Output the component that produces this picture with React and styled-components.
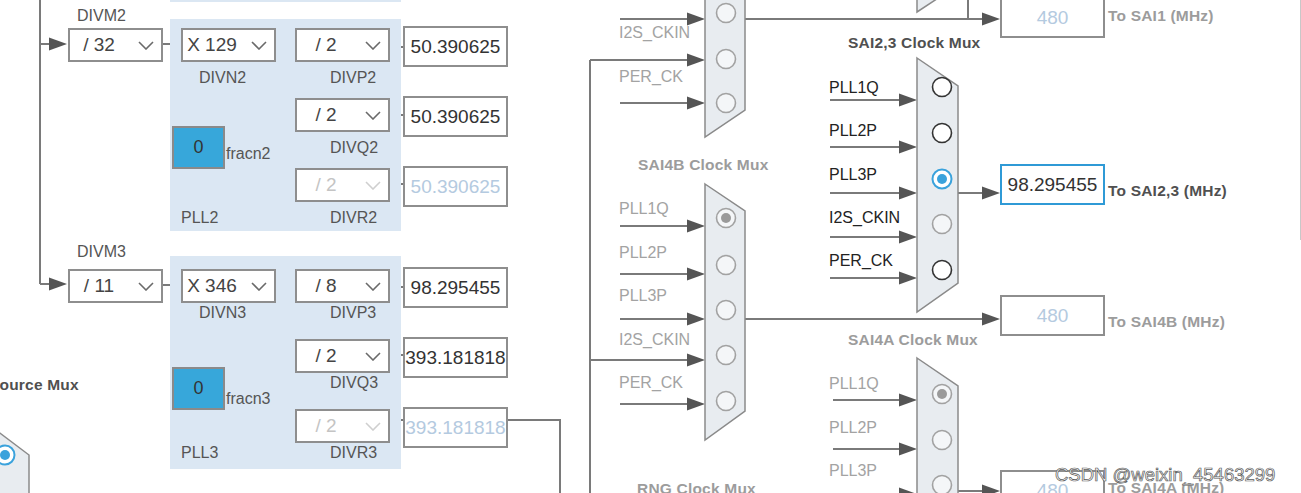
import React from 'react';
import styled, { createGlobalStyle } from 'styled-components';

const GlobalStyle = createGlobalStyle`
  html, body { margin: 0; padding: 0; background: #fff; }
  body { font-family: "Liberation Sans", Arial, sans-serif; }
`;

const Canvas = styled.div`
  position: relative;
  width: 1301px;
  height: 493px;
  overflow: hidden;
  background: #fff;
  font-family: "Liberation Sans", Arial, sans-serif;
`;

/* ---------- drawing layer (wires, muxes, radios) ---------- */

const Drawing = styled.svg`
  position: absolute;
  left: 0;
  top: 0;
  width: 1301px;
  height: 493px;
  z-index: 1;
`;

/* ---------- text ---------- */

const toneColor = {
  dark: '#555',
  active: '#222',
  muted: '#a3a3a3',
};

const Text = styled.span`
  display: block;
  font-size: 16px;
  line-height: 1;
  white-space: nowrap;
  color: ${(p) => toneColor[p.$tone || 'dark']};
`;

const Title = styled.span`
  display: block;
  font-size: 15.5px;
  font-weight: bold;
  line-height: 1;
  letter-spacing: 0.2px;
  white-space: nowrap;
  color: ${(p) => (p.$muted ? '#9c9c9c' : '#505050')};
`;

/* ---------- controls ---------- */

const Select = styled.div`
  box-sizing: border-box;
  width: 95px;
  height: 34px;
  border: 2px solid #8e8e8e;
  background: #fff;
  display: flex;
  align-items: center;
  font-size: 19px;
  color: ${(p) => (p.$disabled ? '#c4c4c4' : '#444')};
`;

const SelectText = styled.span`
  width: 58px;
  text-align: center;
  white-space: pre;
`;

const Chevron = styled.svg`
  margin-left: 10px;
  width: 16px;
  height: 9px;
  fill: none;
  stroke-width: 1.6;
  stroke: ${(p) => (p.$disabled ? '#cfcfcf' : '#6a6a6a')};
`;

const ValueBox = styled.div`
  box-sizing: border-box;
  flex: none;
  width: 105px;
  height: 41px;
  border: 2px solid ${(p) => (p.$focus ? '#2f9ad6' : '#8e8e8e')};
  background: #fff;
  display: flex;
  align-items: center;
  justify-content: center;
  font-size: 19px;
  color: ${(p) => (p.$disabled ? '#b4cae0' : '#333')};
`;

const FracBox = styled.div`
  box-sizing: border-box;
  width: 53px;
  height: 43px;
  border: 2px solid #8a8a8a;
  background: #37a7da;
  display: flex;
  align-items: center;
  justify-content: center;
  font-size: 18px;
  color: #333;
`;

/* ---------- PLL block ---------- */

const PllSection = styled.div`
  position: absolute;
  left: 68px;
  top: ${(p) => p.$y}px;
  z-index: 2;
  display: flex;
  align-items: flex-start;
`;

const DivmCol = styled.div`
  display: flex;
  flex-direction: column;
  gap: ${(p) => p.$gap}px;
  padding-right: 7px;
  & > ${Text} {
    padding-left: 9px;
  }
`;

const Panel = styled.div`
  box-sizing: border-box;
  width: 231px;
  height: ${(p) => p.$h}px;
  margin-top: ${(p) => p.$top}px;
  padding: ${(p) => p.$pad}px 0 0 11px;
  background: #dbe7f3;
  display: grid;
  grid-template-columns: 95px 95px;
  column-gap: 19px;
  align-content: start;
`;

const Column = styled.div`
  display: flex;
  flex-direction: column;
  gap: ${(p) => p.$gap || 0}px;
`;

const Unit = styled.div`
  display: flex;
  flex-direction: column;
  gap: ${(p) => p.$gap}px;
  & > ${Text} {
    padding-left: ${(p) => p.$indent}px;
  }
`;

const FracRow = styled.div`
  display: flex;
  align-items: flex-start;
  margin: ${(p) => p.$top}px 0 0 -9px;
  & > ${Text} {
    margin: ${(p) => p.$labelTop}px 0 0 1px;
  }
`;

const PllName = styled(Text)`
  margin-top: auto;
`;

const Outputs = styled.div`
  display: flex;
  flex-direction: column;
  gap: 29px;
  margin: ${(p) => p.$top}px 0 0 2px;
`;

function DivSelect({ value, disabled }) {
  return (
    <Select $disabled={disabled}>
      <SelectText>{value}</SelectText>
      <Chevron viewBox="0 0 16 9" $disabled={disabled}>
        <polyline points="1,1 8,8 15,1" />
      </Chevron>
    </Select>
  );
}

function Pll({ n, cfg, divm, divn, divs, outs }) {
  const g = cfg.labelGap;
  return (
    <PllSection $y={cfg.y}>
      <DivmCol $gap={cfg.divmGap}>
        <Text>DIVM{n}</Text>
        <DivSelect value={divm} />
      </DivmCol>
      <Panel $h={cfg.h} $top={cfg.panelTop} $pad={cfg.pad}>
        <Column>
          <Unit $gap={g} $indent={18}>
            <DivSelect value={divn} />
            <Text>DIVN{n}</Text>
          </Unit>
          <FracRow $top={48 - g} $labelTop={cfg.fracLabel}>
            <FracBox>0</FracBox>
            <Text>fracn{n}</Text>
          </FracRow>
          <PllName>PLL{n}</PllName>
        </Column>
        <Column $gap={20 - g}>
          {divs.map((d) => (
            <Unit key={d.name} $gap={g} $indent={35}>
              <DivSelect value={d.v} disabled={d.off} />
              <Text>
                {d.name}
                {n}
              </Text>
            </Unit>
          ))}
        </Column>
      </Panel>
      <Outputs $top={cfg.outTop}>
        {outs.map((o, i) => (
          <ValueBox key={i} $disabled={o.off}>
            {o.v}
          </ValueBox>
        ))}
      </Outputs>
    </PllSection>
  );
}

/* ---------- mux labels / outputs ---------- */

const InputList = styled.div`
  position: absolute;
  left: ${(p) => p.$x}px;
  top: ${(p) => p.$y}px;
  z-index: 2;
  display: flex;
  flex-direction: column;
  gap: ${(p) => p.$gap}px;
`;

const MuxTitle = styled(Title)`
  position: absolute;
  left: ${(p) => p.$x}px;
  top: ${(p) => p.$y}px;
  z-index: 2;
`;

const OutputTap = styled.div`
  position: absolute;
  left: 1000px;
  top: ${(p) => p.$y}px;
  z-index: 2;
  display: flex;
  align-items: flex-start;
  gap: 3px;
  & > ${Title} {
    margin-top: ${(p) => p.$dy}px;
  }
`;

const Watermark = styled.div`
  position: absolute;
  left: 1055px;
  top: 466px;
  z-index: 3;
  font-size: 18.5px;
  line-height: 1;
  white-space: nowrap;
  color: #fbfbfb;
  -webkit-text-stroke: 0.7px #5a5a5a;
`;

const TopPanel = styled.div`
  position: absolute;
  left: 170px;
  top: -50px;
  width: 231px;
  height: 52px;
  background: #dbe7f3;
`;

/* ---------- data ---------- */

const pll2 = {
  y: 8, divmGap: 4, panelTop: 11, h: 212, pad: 9, labelGap: 8, fracLabel: 20, outTop: 18,
};
const pll3 = {
  y: 244, divmGap: 9, panelTop: 12, h: 213, pad: 13, labelGap: 2, fracLabel: 24, outTop: 23,
};

const inputLists = [
  { x: 619, y: 25, gap: 28, tone: 'muted', items: ['I2S_CKIN', 'PER_CK'] },
  { x: 619, y: 201, gap: 27.5, tone: 'muted', items: ['PLL1Q', 'PLL2P', 'PLL3P', 'I2S_CKIN', 'PER_CK'] },
  { x: 829, y: 80, gap: 27.25, tone: 'active', items: ['PLL1Q', 'PLL2P', 'PLL3P', 'I2S_CKIN', 'PER_CK'] },
  { x: 829, y: 376, gap: 27.5, tone: 'muted', items: ['PLL1Q', 'PLL2P', 'PLL3P'] },
];

const muxTitles = [
  { x: 848, y: 35, t: 'SAI2,3 Clock Mux' },
  { x: 638, y: 157, t: 'SAI4B Clock Mux', m: true },
  { x: 848, y: 332, t: 'SAI4A Clock Mux', m: true },
  { x: 637, y: 481, t: 'RNG Clock Mux', m: true },
  { x: -11, y: 377, t: 'Source Mux' },
];

const taps = [
  { y: -3, dy: 11, v: '480', t: 'To SAI1 (MHz)', off: true },
  { y: 164, dy: 19, v: '98.295455', t: 'To SAI2,3 (MHz)', focus: true },
  { y: 295, dy: 19, v: '480', t: 'To SAI4B (MHz)', off: true },
  { y: 470, dy: 10, v: '480', t: 'To SAI4A (MHz)', off: true },
];

const muxes = [
  '705,-20 745,-20 745,110 705,137',
  '705,184 745,211 745,411 705,440',
  '917,58 958,86 958,283 917,312',
  '917,358 958,386 958,620 917,650',
  '917,-120 958,-120 958,-15 917,12',
  '-60,388 29,455 29,560 -60,560',
];

const radios = [
  [726, 13, 'off'], [726, 59, 'off'], [726, 103, 'off'],
  [726, 218, 'selGrey'], [726, 265, 'off'], [726, 310, 'off'], [726, 355, 'off'], [726, 401, 'off'],
  [942, 87, 'offActive'], [942, 133, 'offActive'], [942, 179, 'selBlue'], [942, 224, 'off'], [942, 270, 'offActive'],
  [942, 394, 'selGrey'], [942, 440, 'off'], [942, 485, 'off'],
  [5, 455, 'selBlue'],
];

const arrows = [
  [40, 67, 44], [40, 67, 284],
  [620, 705, 19], [590, 705, 60], [620, 705, 103],
  [620, 705, 226], [620, 705, 274], [620, 705, 319], [590, 705, 360], [620, 705, 404],
  [830, 917, 100], [830, 917, 147], [830, 917, 193], [830, 917, 237], [830, 917, 278],
  [833, 917, 400], [833, 917, 449], [833, 917, 494],
  [745, 1000, 19], [958, 1000, 193], [745, 1000, 319], [958, 1000, 491],
];

const wires = [
  'M40 0 V284',
  'M162 44 H181',
  'M276 47 H295 M280 47 V182 M280 115 H295 M280 182 H295',
  'M390 47 H403 M390 115 H403 M390 184 H403',
  'M162 285 H181',
  'M276 288 H295 M280 288 V420 M280 355 H295 M280 420 H295',
  'M390 287 H403 M390 355 H403 M390 420 H403',
  'M507 420 H560 V493',
  'M590 60 V493',
  'M968 0 V19',
];

function Radio({ x, y, state }) {
  if (state === 'selBlue') {
    return (
      <g>
        <circle cx={x} cy={y} r={9.5} fill="#fff" stroke="#3aa2dc" strokeWidth={2} />
        <circle cx={x} cy={y} r={5} fill="#3aa2dc" />
      </g>
    );
  }
  if (state === 'selGrey') {
    return (
      <g>
        <circle cx={x} cy={y} r={9.5} fill="#f4f6f8" stroke="#a2a2a2" strokeWidth={1.6} />
        <circle cx={x} cy={y} r={5} fill="#9a9a9a" />
      </g>
    );
  }
  const active = state === 'offActive';
  return (
    <circle
      cx={x}
      cy={y}
      r={9.5}
      fill={active ? '#fff' : '#f4f6f8'}
      stroke={active ? '#333' : '#a2a2a2'}
      strokeWidth={1.6}
    />
  );
}

function Arrow({ x1, x2, y }) {
  return (
    <g>
      <line x1={x1} y1={y} x2={x2 - 12} y2={y} stroke="#7a7a7a" strokeWidth={2} />
      <polygon points={`${x2},${y} ${x2 - 18},${y - 6.5} ${x2 - 18},${y + 6.5}`} fill="#555" />
    </g>
  );
}

function Diagram() {
  return (
    <Drawing viewBox="0 0 1301 493">
      {wires.map((d, i) => (
        <path key={i} d={d} fill="none" stroke="#7a7a7a" strokeWidth={2} />
      ))}
      <line x1={1300.5} y1={0} x2={1300.5} y2={240} stroke="#c8c8c8" strokeWidth={1} />
      {arrows.map(([x1, x2, y], i) => (
        <Arrow key={i} x1={x1} x2={x2} y={y} />
      ))}
      {muxes.map((pts, i) => (
        <polygon key={i} points={pts} fill="#e8ecf0" stroke="#8a8a8a" strokeWidth={1.5} />
      ))}
      {radios.map(([x, y, s], i) => (
        <Radio key={i} x={x} y={y} state={s} />
      ))}
    </Drawing>
  );
}

export default function App() {
  return (
    <>
      <GlobalStyle />
      <Canvas>
        <TopPanel />
        <Pll
          n={2}
          cfg={pll2}
          divm="/ 32"
          divn="X 129"
          divs={[
            { name: 'DIVP', v: '/ 2' },
            { name: 'DIVQ', v: '/ 2' },
            { name: 'DIVR', v: '/ 2', off: true },
          ]}
          outs={[{ v: '50.390625' }, { v: '50.390625' }, { v: '50.390625', off: true }]}
        />
        <Pll
          n={3}
          cfg={pll3}
          divm="/ 11"
          divn="X 346"
          divs={[
            { name: 'DIVP', v: '/ 8' },
            { name: 'DIVQ', v: '/ 2' },
            { name: 'DIVR', v: '/ 2', off: true },
          ]}
          outs={[{ v: '98.295455' }, { v: '393.181818' }, { v: '393.181818', off: true }]}
        />

        <Diagram />

        {inputLists.map((l, i) => (
          <InputList key={i} $x={l.x} $y={l.y} $gap={l.gap}>
            {l.items.map((t, j) => (
              <Text key={j} $tone={l.tone}>
                {t}
              </Text>
            ))}
          </InputList>
        ))}

        {muxTitles.map((h, i) => (
          <MuxTitle key={i} $x={h.x} $y={h.y} $muted={h.m}>
            {h.t}
          </MuxTitle>
        ))}

        {taps.map((t, i) => (
          <OutputTap key={i} $y={t.y} $dy={t.dy}>
            <ValueBox $disabled={t.off} $focus={t.focus}>
              {t.v}
            </ValueBox>
            <Title $muted={t.off}>{t.t}</Title>
          </OutputTap>
        ))}

        <Watermark>CSDN @weixin_45463299</Watermark>
      </Canvas>
    </>
  );
}
